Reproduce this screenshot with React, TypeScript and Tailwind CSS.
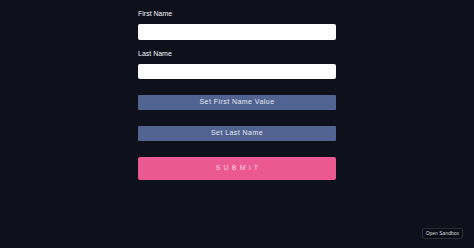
import React from "react";

export default function App() {
  return (
    <div
      className="relative min-h-[248px] w-full bg-[#0e101c]"
      style={{ fontFamily: '"Liberation Sans", Arial, sans-serif' }}
    >
      <form
        className="mx-auto flex w-[198px] flex-col pt-[9px]"
        onSubmit={(e) => e.preventDefault()}
      >
        <label className="block h-[9px] text-[7px] leading-[9px] text-[#f4f4f6]">First Name</label>
        <input className="mt-[6px] h-[15.5px] w-full rounded-[2px] bg-white outline-none" />
        <label className="mt-[9px] block h-[9px] text-[7px] leading-[9px] text-[#f4f4f6]">Last Name</label>
        <input className="mt-[6px] h-[15.5px] w-full rounded-[2px] bg-white outline-none" />
        <button
          type="button"
          className="mt-[15.5px] h-[15px] w-full rounded-[1px] bg-[#516391] text-[7px] tracking-[0.45px] text-[#e6e9f2]"
        >
          Set First Name Value
        </button>
        <button
          type="button"
          className="mt-[16.5px] h-[15px] w-full rounded-[1px] bg-[#516391] text-[7px] tracking-[0.45px] text-[#e6e9f2]"
        >
          Set Last Name
        </button>
        <button
          type="submit"
          className="mt-[15.5px] h-[23px] w-full rounded-[2px] bg-[#ec5990] pl-[3px] text-[7px] tracking-[3.2px] text-[#fbd3e2]"
        >
          SUBMIT
        </button>
      </form>
      <button
        type="button"
        className="absolute bottom-[9px] right-[11px] h-[11px] rounded-[2px] border border-[#2a2d38] bg-[#0b0d16] px-[3px] text-[5px] leading-[9px] text-[#d8d8dc]"
      >
        Open Sandbox
      </button>
    </div>
  );
}
